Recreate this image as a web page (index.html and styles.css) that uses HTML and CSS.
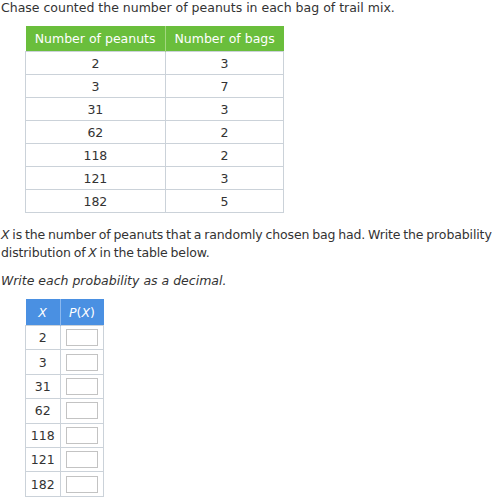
FILE: index.html
```html
<!DOCTYPE html>
<html>
<head>
<meta charset="utf-8">
<link rel="stylesheet" href="styles.css">
</head>
<body>
<div class="page">
  <p class="intro">Chase counted the number of peanuts in each bag of trail mix.</p>
  <table class="data">
    <thead>
      <tr><th>Number of peanuts</th><th>Number of bags</th></tr>
    </thead>
    <tbody>
      <tr><td>2</td><td>3</td></tr>
      <tr><td>3</td><td>7</td></tr>
      <tr><td>31</td><td>3</td></tr>
      <tr><td>62</td><td>2</td></tr>
      <tr><td>118</td><td>2</td></tr>
      <tr><td>121</td><td>3</td></tr>
      <tr><td>182</td><td>5</td></tr>
    </tbody>
  </table>
  <p class="question"><i>X</i> is the number of peanuts that a randomly chosen bag had. Write the probability<br>distribution of <i>X</i> in the table below.</p>
  <p class="note"><i>Write each probability as a decimal.</i></p>
  <table class="dist">
    <thead>
      <tr><th><i>X</i></th><th><i>P</i>(<i>X</i>)</th></tr>
    </thead>
    <tbody>
      <tr><td>2</td><td><input type="text" class="box"></td></tr>
      <tr><td>3</td><td><input type="text" class="box"></td></tr>
      <tr><td>31</td><td><input type="text" class="box"></td></tr>
      <tr><td>62</td><td><input type="text" class="box"></td></tr>
      <tr><td>118</td><td><input type="text" class="box"></td></tr>
      <tr><td>121</td><td><input type="text" class="box"></td></tr>
      <tr><td>182</td><td><input type="text" class="box"></td></tr>
    </tbody>
  </table>
</div>
</body>
</html>
```

FILE: styles.css
```css
html, body {
  margin: 0;
  padding: 0;
  background: #fff;
}
.page {
  font-family: "DejaVu Sans", Verdana, sans-serif;
  font-size: 12.5px;
  color: #333;
  padding: 0 0 0 1px;
  width: 497px;
}
p {
  margin: 0;
  line-height: 18px;
}
.intro {
  margin-top: -1px;
}
table {
  border-collapse: collapse;
}
.data {
  margin: 9px 0 0 24px;
  width: 259px;
}
.data th {
  background: #6abe3c;
  color: #fff;
  font-weight: normal;
  height: 25px;
  padding: 0 6px;
  border-left: 1px solid #a3d67f;
  text-align: center;
  white-space: nowrap;
}
.data th:first-child { border-left: none; }
.data td {
  border: 1px solid #cbd2d9;
  height: 22px;
  padding: 0;
  text-align: center;
}
.question {
  margin-top: 13px;
  word-spacing: -1px;
  letter-spacing: -0.12px;
  white-space: nowrap;
}
.note {
  margin-top: 10px;
}
.dist {
  margin: 9px 0 0 24px;
}
.dist th {
  background: #4a90e2;
  color: #fff;
  font-weight: normal;
  height: 26px;
  padding: 0;
  border-left: 1px solid #8bb8ee;
  text-align: center;
}
.dist th:first-child { border-left: none; width: 34px; }
.dist th:last-child { width: 43px; }
.dist td {
  border: 1px solid #cbd2d9;
  height: 23.4px;
  padding: 0;
  text-align: center;
}
.box {
  display: block;
  box-sizing: border-box;
  width: 32px;
  height: 17px;
  margin: 0 auto;
  border: 1px solid #c3c3c3;
  padding: 0;
  background: #fff;
}
```
